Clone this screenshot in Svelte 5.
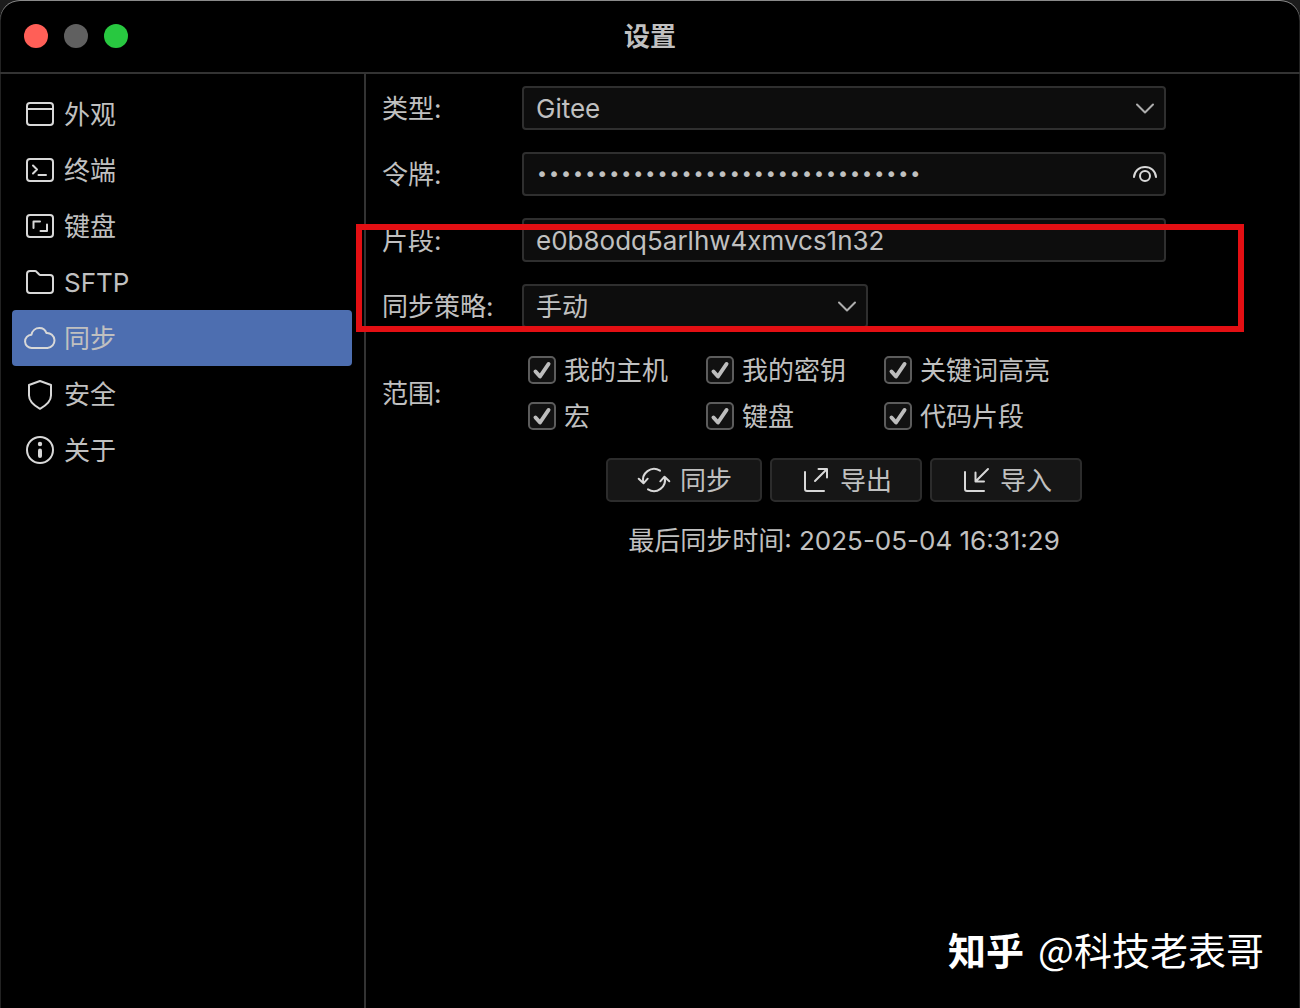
<script lang="ts">
  type Item = { id: string; label: string };

  const sections: Item[] = [
    { id: "appearance", label: "外观" },
    { id: "terminal", label: "终端" },
    { id: "keyboard", label: "键盘" },
    { id: "sftp", label: "SFTP" },
    { id: "sync", label: "同步" },
    { id: "security", label: "安全" },
    { id: "about", label: "关于" },
  ];

  let active = $state("sync");
  let provider = $state("Gitee");
  let token = $state("a7c1e09b52d84f36a7c1e09b52d84f36");
  let showToken = $state(false);
  let snippet = $state("e0b8odq5arlhw4xmvcs1n32");
  let policy = $state("手动");

  let ranges = $state([
    { id: "hosts", label: "我的主机", checked: true },
    { id: "keys", label: "我的密钥", checked: true },
    { id: "highlight", label: "关键词高亮", checked: true },
    { id: "macros", label: "宏", checked: true },
    { id: "keymap", label: "键盘", checked: true },
    { id: "snippets", label: "代码片段", checked: true },
  ]);
</script>

{#snippet sectionIcon(id: string)}
  <svg class="icon" width="32" height="32" viewBox="0 0 32 32" aria-hidden="true">
    {#if id === "appearance"}
      <rect x="3" y="5" width="26" height="22" rx="3" />
      <path d="M3 11h26" />
    {:else if id === "terminal"}
      <rect x="3" y="5" width="26" height="22" rx="3" />
      <path d="M9 11.5l4 4-4 4M14.5 21H22" />
    {:else if id === "keyboard"}
      <rect x="3" y="5" width="26" height="22" rx="3" />
      <path d="M9.5 18v-6.500h6.500M16.500 21H23v-6.500" />
    {:else if id === "sftp"}
      <path d="M3 24V8a3 3 0 0 1 3-3h5a2 2 0 0 1 1.500.7L15 8.300a2 2 0 0 0 1.500.7H26a3 3 0 0 1 3 3v12a3 3 0 0 1-3 3H6a3 3 0 0 1-3-3z" />
    {:else if id === "sync"}
      <path d="M8 26a6.600 6.600 0 0 1-.6-13.200C8.200 8.800 11.400 6 15.400 6c3.300 0 6 1.900 7 5a7.500 7.500 0 1 1 1.100 15z" />
    {:else if id === "security"}
      <path d="M16 3l11 4v10.500c0 6-5 10-11 13.300C10 27.500 5 23.500 5 17.500V7z" />
    {:else}
      <circle cx="16" cy="16" r="13" />
      <circle class="fill" cx="16" cy="10" r="2.200" />
      <rect class="fill" x="14" y="14.500" width="4" height="9.500" rx="2" />
    {/if}
  </svg>
{/snippet}

{#snippet chevron()}
  <svg class="icon icon--chevron" width="24" height="24" viewBox="0 0 24 24" aria-hidden="true">
    <path d="M4 8.500l8 8 8-8" />
  </svg>
{/snippet}

<div class="window">
  <header class="titlebar">
    <div class="lights">
      <button class="light light--close" aria-label="关闭"></button>
      <button class="light light--min" aria-label="最小化"></button>
      <button class="light light--max" aria-label="最大化"></button>
    </div>
    <h1 class="title">设置</h1>
  </header>

  <div class="body">
    <nav class="sidebar">
      {#each sections as section (section.id)}
        <button
          class="nav-item"
          class:nav-item--active={active === section.id}
          onclick={() => (active = section.id)}
        >
          {@render sectionIcon(section.id)}
          <span class="text">{section.label}</span>
        </button>
      {/each}
    </nav>

    <main class="content">
      <div class="form">
        <label class="text" for="provider">类型:</label>
        <div class="field">
          <select id="provider" class="control" bind:value={provider}>
            <option>Gitee</option>
            <option>GitHub</option>
          </select>
          {@render chevron()}
        </div>

        <label class="text" for="token">令牌:</label>
        <div class="field">
          <input
            id="token"
            class="control"
            class:control--masked={!showToken}
            type={showToken ? "text" : "password"}
            bind:value={token}
          />
          <button class="eye" aria-label="显示令牌" onclick={() => (showToken = !showToken)}>
            <svg class="icon" width="24" height="24" viewBox="0 0 24 24" aria-hidden="true">
              <path d="M1 15C1.500 9 6 5 12 5s10.500 4 11 10" />
              <circle cx="12" cy="14" r="5" />
            </svg>
          </button>
        </div>

        <label class="text" for="snippet">片段:</label>
        <div class="field">
          <input id="snippet" class="control" type="text" spellcheck="false" bind:value={snippet} />
        </div>

        <label class="text" for="policy">同步策略:</label>
        <div class="field field--short">
          <select id="policy" class="control" bind:value={policy}>
            <option>手动</option>
            <option>自动</option>
          </select>
          {@render chevron()}
        </div>

        <span class="text" id="range-label">范围:</span>
        <div class="ranges" role="group" aria-labelledby="range-label">
          {#each ranges as range (range.id)}
            <label class="check">
              <span class="check__mark">
                <input type="checkbox" bind:checked={range.checked} />
                {#if range.checked}
                  <svg width="28" height="28" viewBox="0 0 28 28" aria-hidden="true">
                    <path d="M7.500 15.500l4.500 5L20.500 8" />
                  </svg>
                {/if}
              </span>
              <span class="text">{range.label}</span>
            </label>
          {/each}
        </div>

        <div class="actions">
          <button class="action">
            <svg class="icon" width="36" height="36" viewBox="0 0 36 36" aria-hidden="true">
              <path d="M24 8.700A11 11 0 0 0 7.500 21M2.700 16.700l4.800 4.600 4.200-4.600" />
              <path d="M12 27.300A11 11 0 0 0 28.500 15M33.300 19.300l-4.800-4.600-4.200 4.600" />
            </svg>
            <span class="text">同步</span>
          </button>
          <button class="action">
            <svg class="icon" width="32" height="32" viewBox="0 0 32 32" aria-hidden="true">
              <path d="M5 8v17a2 2 0 0 0 2 2h17M15 17L27 5M18.500 5H27v8.500" />
            </svg>
            <span class="text">导出</span>
          </button>
          <button class="action">
            <svg class="icon" width="32" height="32" viewBox="0 0 32 32" aria-hidden="true">
              <path d="M5 8v17a2 2 0 0 0 2 2h17M28 5L15.500 17.500M15.500 8.500v9H24" />
            </svg>
            <span class="text">导入</span>
          </button>
        </div>

        <p class="status">最后同步时间: 2025-05-04 16:31:29</p>
      </div>

      <div class="highlight"></div>
    </main>
  </div>

  <div class="watermark"><strong>知乎</strong> <span>@科技老表哥</span></div>
</div>

<style>
  :global(body) {
    margin: 0;
    background: #1c1c1c;
  }

  .window,
  .window * {
    box-sizing: border-box;
  }

  .window {
    position: relative;
    display: flex;
    flex-direction: column;
    min-height: 100vh;
    background: #000;
    border-radius: 20px 20px 0 0;
    box-shadow:
      inset 0 1px 0 #8a8a8a,
      inset 1px 0 0 #222,
      inset -1px 0 0 #222;
    color: #c0c0c0;
    font-family: Inter, "Noto Sans CJK SC", sans-serif;
    font-size: 26px;
    line-height: 34px;
  }

  button,
  input,
  select {
    margin: 0;
    color: inherit;
    font: inherit;
  }

  .text {
    padding-top: 2px;
  }

  .icon {
    flex: none;
    fill: none;
    stroke: #d8d8d8;
    stroke-width: 2;
    stroke-linecap: round;
    stroke-linejoin: round;
  }

  .icon .fill {
    fill: #d8d8d8;
    stroke: none;
  }

  .titlebar {
    display: grid;
    grid-template-columns: 1fr auto 1fr;
    align-items: center;
    height: 74px;
    padding: 0 24px;
    border-bottom: 2px solid #333;
  }

  .lights {
    display: flex;
    gap: 16px;
  }

  .light {
    width: 24px;
    height: 24px;
    padding: 0;
    border: 0;
    border-radius: 50%;
  }

  .light--close {
    background: #ff5f57;
  }

  .light--min {
    background: #606060;
  }

  .light--max {
    background: #28c840;
  }

  .title {
    margin: 0;
    padding-top: 2px;
    font-size: 26px;
    font-weight: 700;
  }

  .body {
    display: flex;
    flex: 1;
  }

  .sidebar {
    flex: none;
    width: 366px;
    padding: 12px;
    border-right: 2px solid #333;
  }

  .nav-item {
    display: flex;
    align-items: center;
    gap: 8px;
    width: 100%;
    height: 56px;
    padding: 0 12px;
    border: 0;
    border-radius: 4px;
    background: none;
    text-align: left;
  }

  .nav-item--active {
    background: #4d6eb0;
  }

  .content {
    position: relative;
    flex: 1;
    min-width: 0;
    padding: 12px 134px 12px 16px;
  }

  .form {
    display: grid;
    grid-template-columns: 140px minmax(0, 1fr);
    row-gap: 22px;
    align-items: center;
  }

  .field {
    display: grid;
    align-items: center;
  }

  .field > * {
    grid-area: 1 / 1;
  }

  .field--short {
    max-width: 346px;
  }

  .control {
    width: 100%;
    height: 44px;
    padding: 0 12px;
    border: 2px solid #2f2f2f;
    border-radius: 4px;
    background: #0d0d0d;
    appearance: none;
    outline: none;
  }

  select.control {
    padding-top: 2px;
  }

  .control--masked {
    font-family: "DejaVu Sans Mono", monospace;
    font-size: 20px;
  }

  .icon--chevron,
  .eye {
    justify-self: end;
    margin-right: 9px;
  }

  .icon--chevron {
    stroke: #adadad;
    pointer-events: none;
  }

  .eye {
    display: flex;
    padding: 0;
    border: 0;
    background: none;
  }

  .ranges {
    display: grid;
    grid-template-columns: repeat(3, 178px);
    gap: 6px 0;
    padding-left: 6px;
  }

  .check {
    display: flex;
    align-items: center;
    gap: 8px;
    height: 40px;
    white-space: nowrap;
  }

  .check__mark {
    display: grid;
  }

  .check__mark > * {
    grid-area: 1 / 1;
  }

  .check__mark input {
    width: 28px;
    height: 28px;
    border: 2px solid #5c5c5c;
    border-radius: 5px;
    background: #111;
    appearance: none;
  }

  .check__mark svg {
    fill: none;
    stroke: #bdbdbd;
    stroke-width: 4;
    stroke-linecap: round;
    stroke-linejoin: round;
    pointer-events: none;
  }

  .actions {
    display: flex;
    grid-column: 2;
    justify-content: center;
    gap: 8px;
  }

  .action {
    display: flex;
    align-items: center;
    gap: 8px;
    height: 44px;
    padding: 0 28px;
    border: 2px solid #2c2c2c;
    border-radius: 5px;
    background: #161616;
    white-space: nowrap;
  }

  .status {
    grid-column: 2;
    margin: 0;
    text-align: center;
  }

  /* marks the snippet and policy rows */
  .highlight {
    position: absolute;
    top: 150px;
    right: 56px;
    left: -10px;
    height: 108px;
    border: 6px solid #e30f13;
    pointer-events: none;
  }

  .watermark {
    position: absolute;
    right: 36px;
    bottom: 35px;
    display: flex;
    gap: 14px;
    color: #fff;
    font-family: "Noto Sans CJK SC", sans-serif;
    font-size: 38px;
    line-height: 48px;
  }
</style>
